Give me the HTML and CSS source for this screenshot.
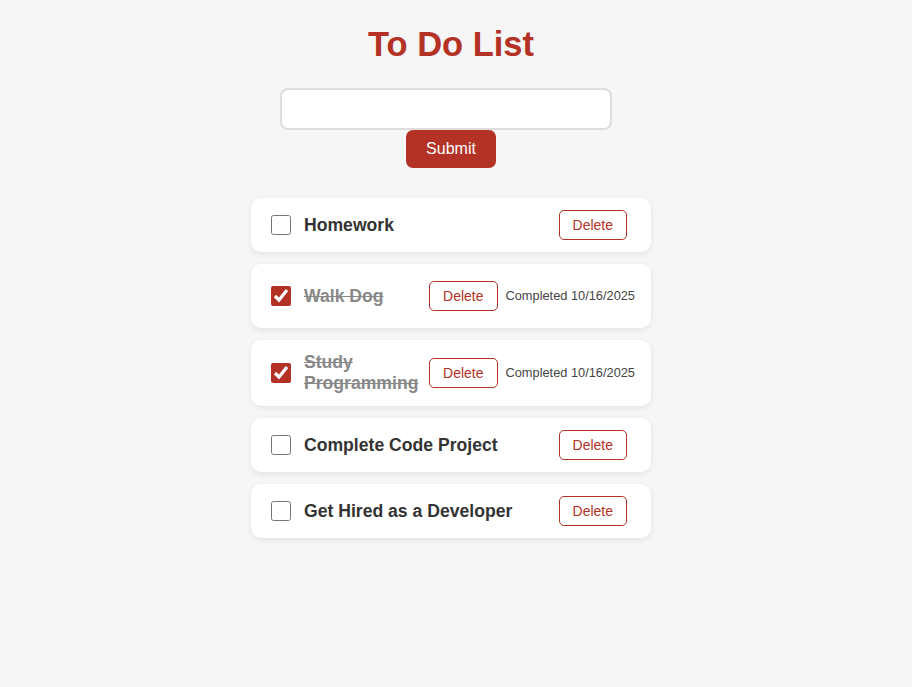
FILE: index.html
```html
<!DOCTYPE html>
<html lang="en">
<head>
<meta charset="utf-8">
<title>To Do List</title>
<link rel="stylesheet" href="styles.css">
</head>
<body>
<main class="app">
  <h1 class="title">To Do List</h1>
  <form class="todo-form">
    <input class="todo-input" type="text" aria-label="New task">
    <button class="submit-btn" type="button">Submit</button>
  </form>
  <ul class="todo-list">
    <li class="todo-item">
      <input class="todo-check" type="checkbox">
      <span class="todo-label">Homework</span>
      <button class="delete-btn" type="button">Delete</button>
      <span class="completed-date"></span>
    </li>
    <li class="todo-item done">
      <input class="todo-check" type="checkbox" checked>
      <span class="todo-label">Walk Dog</span>
      <button class="delete-btn" type="button">Delete</button>
      <span class="completed-date">Completed 10/16/2025</span>
    </li>
    <li class="todo-item done">
      <input class="todo-check" type="checkbox" checked>
      <span class="todo-label">Study Programming</span>
      <button class="delete-btn" type="button">Delete</button>
      <span class="completed-date">Completed 10/16/2025</span>
    </li>
    <li class="todo-item">
      <input class="todo-check" type="checkbox">
      <span class="todo-label">Complete Code Project</span>
      <button class="delete-btn" type="button">Delete</button>
      <span class="completed-date"></span>
    </li>
    <li class="todo-item">
      <input class="todo-check" type="checkbox">
      <span class="todo-label">Get Hired as a Developer</span>
      <button class="delete-btn" type="button">Delete</button>
      <span class="completed-date"></span>
    </li>
  </ul>
</main>
</body>
</html>
```
FILE: styles.css
```css
html, body {
  margin: 0;
  padding: 0;
  background: #f6f6f6;
  font-family: "Liberation Sans", Arial, sans-serif;
  color: #333;
}

.app {
  display: flex;
  flex-direction: column;
  align-items: center;
  padding: 25px 10px 40px 0;
}

.title {
  margin: 0;
  font-size: 34.5px;
  line-height: 38.5px;
  font-weight: bold;
  color: #b33125;
}

.todo-form {
  display: flex;
  flex-direction: column;
  align-items: center;
  margin-top: 24.5px;
}

.todo-input {
  box-sizing: border-box;
  width: 332px;
  height: 42px;
  margin: 0 10px 0 0;
  padding: 10px;
  border: 2px solid #dddddd;
  border-radius: 8px;
  background: #ffffff;
  font-family: inherit;
  font-size: 16px;
  outline: none;
}

.submit-btn {
  box-sizing: border-box;
  height: 38px;
  padding: 0 20px;
  border: none;
  border-radius: 7px;
  background: #b33125;
  color: #ffffff;
  font-family: inherit;
  font-size: 16px;
  cursor: pointer;
}

.todo-list {
  list-style: none;
  margin: 30px 0 0;
  padding: 0;
  width: 400px;
  display: flex;
  flex-direction: column;
  gap: 12px;
}

.todo-item {
  display: flex;
  align-items: center;
  padding: 12px 16px 12px 20px;
  background: #ffffff;
  border-radius: 10px;
  box-shadow: 0 2px 6px rgba(0, 0, 0, 0.08);
}

.todo-check {
  flex: none;
  width: 20px;
  height: 20px;
  margin: 0;
  accent-color: #b33125;
}

.todo-label {
  flex: 1;
  margin: 0 10px 0 13px;
  font-size: 17.6px;
  line-height: 21px;
  font-weight: bold;
  color: #333333;
}

.done .todo-label {
  color: #888888;
  text-decoration: line-through;
}

.delete-btn {
  flex: none;
  box-sizing: border-box;
  height: 30px;
  padding: 0 13px;
  border: 1px solid #b33125;
  border-radius: 5px;
  background: #ffffff;
  color: #b33125;
  font-family: inherit;
  font-size: 14px;
  cursor: pointer;
}

.completed-date {
  flex: none;
  margin-left: 8px;
  font-size: 12.8px;
  color: #444444;
  white-space: nowrap;
}

.done .completed-date {
  line-height: 40px;
}
```
